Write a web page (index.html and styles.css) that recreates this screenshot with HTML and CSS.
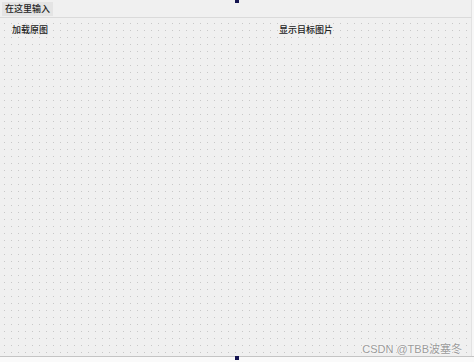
FILE: index.html
```html
<!DOCTYPE html>
<html>
<head>
<meta charset="utf-8">
<link rel="stylesheet" href="styles.css">
</head>
<body>
<div class="form">
  <div class="menubar"><span class="menu-input">在这里输入</span></div>
  <div class="canvas">
    <div class="labels">
      <span class="label">加载原图</span>
      <span class="label label-right">显示目标图片</span>
    </div>
  </div>
  <div class="footer"></div>
  <span class="handle handle-top"></span>
  <span class="handle handle-bottom"></span>
  <span class="watermark">CSDN @TBB波塞冬</span>
</div>
</body>
</html>
```
FILE: styles.css
```css
html, body {
  margin: 0;
  padding: 0;
  background: #f7f7f7;
}
.form {
  position: relative;
  width: 474px;
  height: 362px;
  display: flex;
  flex-direction: column;
  font-family: "Noto Sans CJK SC", "Liberation Sans", sans-serif;
  color: #1e1e1e;
  overflow: hidden;
}
.menubar {
  height: 18px;
  flex: none;
  background: #f0f0f0;
  border-bottom: 1px solid #dadada;
  display: flex;
  align-items: center;
  padding-left: 2px;
  box-sizing: border-box;
  margin-right: 2px;
  border-right: 1px solid #e2e2e2;
}
.menu-input {
  background: #e4e4e4;
  font-size: 9px;
  font-weight: 500;
  line-height: 14px;
  padding: 0 3px 0 3px;
  margin-top: 1px;
  color: #222;
}
.canvas {
  flex: 1;
  background-color: #f0f0f0;
  background-image: radial-gradient(circle, #c8c8c8 0.7px, transparent 1px);
  background-size: 7px 7px;
  background-position: 1px 2px;
  margin-right: 2px;
  border-right: 1px solid #e2e2e2;
}
.labels {
  display: flex;
  padding: 5px 0 0 12px;
}
.label {
  font-size: 9px;
  font-weight: 500;
  line-height: 14px;
  color: #222;
}
.label-right {
  margin-left: 231px;
}
.footer {
  height: 5px;
  flex: none;
  border-top: 1px solid #c4c4c4;
  background: #fafafa;
}
.handle {
  position: absolute;
  left: 235px;
  width: 4px;
  height: 4px;
  background: #141450;
}
.handle-top {
  top: 0;
  height: 3px;
}
.handle-bottom {
  top: 356px;
}
.watermark {
  position: absolute;
  right: 12px;
  bottom: 6px;
  font-family: "Liberation Sans", "Noto Sans CJK SC", sans-serif;
  font-size: 11px;
  color: #9a9a9a;
  text-shadow: 0 0 2px #ffffff, 0 0 1px #ffffff;
}
```
